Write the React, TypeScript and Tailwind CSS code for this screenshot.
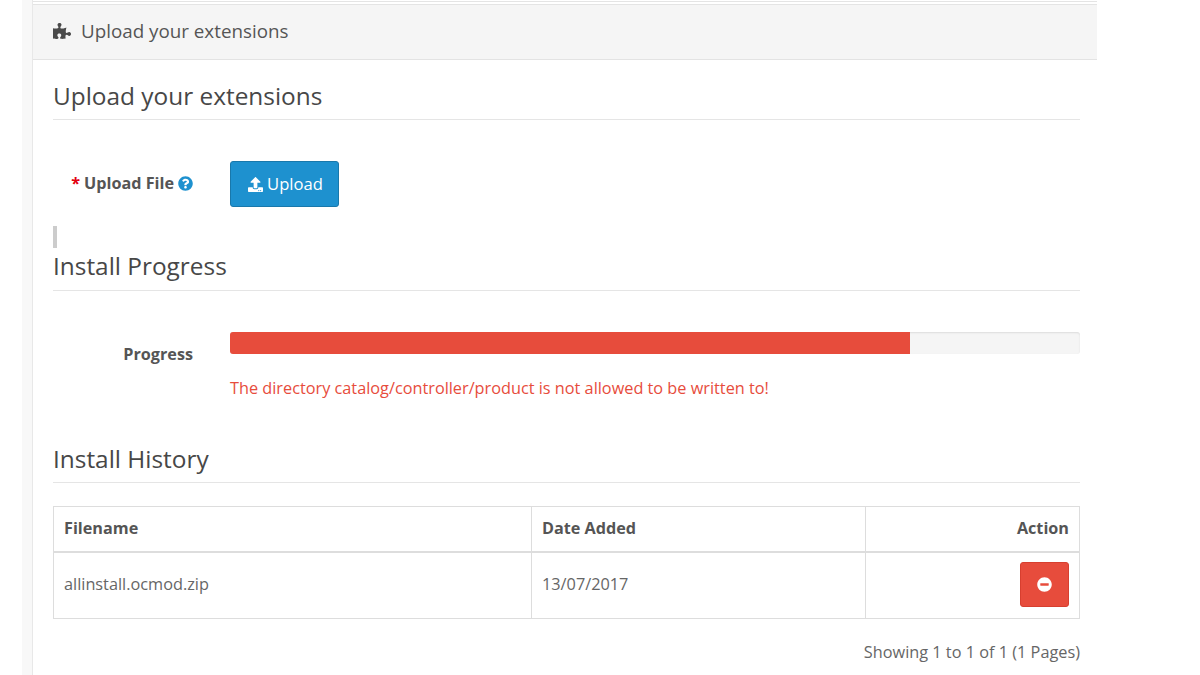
import React from "react";
import { FaPuzzlePiece, FaUpload, FaQuestionCircle, FaMinusCircle } from "react-icons/fa";

const Legend = ({ title, tall }: { title: string; tall?: boolean }) => (
  <h2
    className={
      (tall ? "h-[39px] " : "h-[38px] ") +
      "border-b border-[#e5e5e5] text-[24.4px] leading-[27px] text-[#474747] font-normal"
    }
  >
    {title}
  </h2>
);

export default function App() {
  return (
    <div className="w-[1200px] h-[675px] overflow-hidden bg-white flex font-['Open_Sans',sans-serif] text-[#666]">
      <div className="w-[22px] shrink-0" />
      <div className="w-[11px] shrink-0 bg-[#f8f8f8] border-r border-[#e8e8e8]" />
      <div className="w-[1064px] shrink-0">
        <div className="h-[5px] pt-[1px]">
          <div className="h-[4px] border-y border-[#e4e4e4]" />
        </div>
        <div className="h-[55px] bg-[#f5f5f5] border-b border-[#e3e3e3] flex items-center pl-[20px] pb-[2px] gap-[10px] text-[#555]">
          <FaPuzzlePiece className="w-[18px] h-[18px] text-[#4a4a4a]" />
          <span className="text-[18.8px]">Upload your extensions</span>
        </div>
        <div className="pl-[20px] pr-[17px] pt-[22px]">
          <Legend title="Upload your extensions" />
          <div className="flex mt-[41px] h-[46px]">
            <div className="w-[140px] flex items-center justify-end gap-[4px] text-[16.2px] font-bold text-[#555] pb-[1px]">
              <span className="text-[#e3000f]">*</span>
              <span>Upload File</span>
              <FaQuestionCircle className="w-[15px] h-[15px] text-[#1e91cf]" />
            </div>
            <button className="ml-[37px] w-[109px] h-[46px] bg-[#1e91cf] border border-[#1978ab] rounded-[3px] text-white text-[16.6px] flex items-center justify-center gap-[4px] pl-[2px]">
              <FaUpload className="w-[15px] h-[15px]" />
              <span>Upload</span>
            </button>
          </div>
          <div className="w-[4px] h-[22px] bg-[#cccccc] mt-[19px]" />
          <div className="mt-[4px]">
            <Legend title="Install Progress" tall />
          </div>
          <div className="flex mt-[41px]">
            <div className="w-[140px] pt-[10px] text-right text-[16.2px] font-bold text-[#555]">Progress</div>
            <div className="ml-[37px] flex-1">
              <div className="h-[22px] bg-[#f5f5f5] rounded-[3px] overflow-hidden shadow-[inset_0_1px_2px_rgba(0,0,0,0.1)]">
                <div className="h-full w-[80%] bg-[#e74c3c]" />
              </div>
              <div className="mt-[22px] text-[16.27px] leading-[24px] text-[#e74c3c]">
                The directory catalog/controller/product is not allowed to be written to!
              </div>
            </div>
          </div>
          <div className="mt-[45px]">
            <Legend title="Install History" />
          </div>
          <div className="mt-[23px] border border-[#dddddd]">
            <div className="grid grid-cols-[478px_334px_1fr] h-[46px] border-b-2 border-[#dddddd] text-[16.2px] font-bold text-[#555]">
              <div className="flex items-center pl-[10px] pb-[2px] border-r border-[#dddddd]">Filename</div>
              <div className="flex items-center pl-[10px] pb-[2px] border-r border-[#dddddd]">Date Added</div>
              <div className="flex items-center justify-end pr-[10px] pb-[2px]">Action</div>
            </div>
            <div className="grid grid-cols-[478px_334px_1fr] h-[65px] text-[16.3px] text-[#666]">
              <div className="flex items-center pl-[10px] pb-[2px] border-r border-[#dddddd]">allinstall.ocmod.zip</div>
              <div className="flex items-center pl-[10px] pb-[2px] border-r border-[#dddddd]">13/07/2017</div>
              <div className="flex items-center justify-end pr-[10px] pb-[2px]">
                <button className="w-[49px] h-[45px] bg-[#e74c3c] border border-[#d73f2f] rounded-[3px] flex items-center justify-center text-white">
                  <FaMinusCircle className="w-[15px] h-[15px] mr-[1px]" />
                </button>
              </div>
            </div>
          </div>
          <div className="mt-[21px] text-right text-[16.3px] leading-[24px] text-[#666]">
            Showing 1 to 1 of 1 (1 Pages)
          </div>
        </div>
      </div>
    </div>
  );
}
